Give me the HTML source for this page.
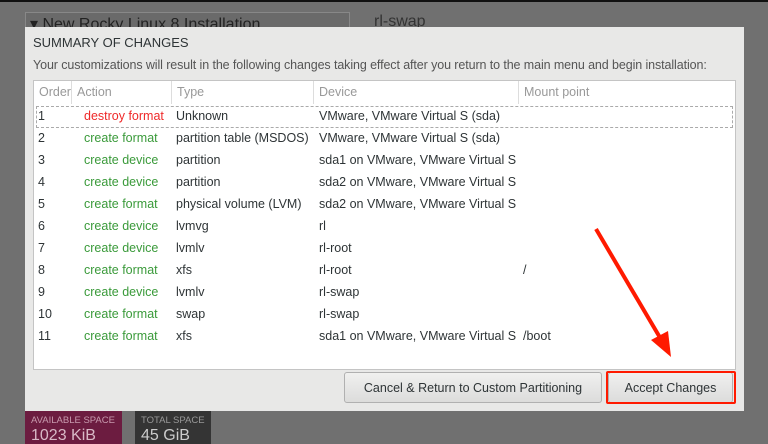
<!DOCTYPE html>
<html><head><meta charset="utf-8"><style>
*{margin:0;padding:0;box-sizing:border-box}
html,body{width:768px;height:444px;overflow:hidden}
body{background:#707070;font-family:"Liberation Sans",sans-serif;font-size:12.5px;color:#2e3436;position:relative}
.topbar{position:absolute;left:0;top:0;width:768px;height:2px;background:#111}
.bgpanel{position:absolute;left:25px;top:12px;width:325px;height:30px;border:1px solid #888;background:#6a6a6a}
.bgtitle{position:absolute;left:30px;top:14px;font-size:16px;color:#222}
.bgr{position:absolute;left:374px;top:13px;font-size:16px;color:#333}
.dlg{position:absolute;left:25px;top:27px;width:719px;height:384px;background:#e8e8e7}
.h{position:absolute;left:8px;top:8px;font-size:13px;color:#2e3436}
.sub{position:absolute;left:8px;top:31px;font-size:12.5px;color:#555;white-space:nowrap;letter-spacing:-0.1px}
.tbl{position:absolute;left:8px;top:53px;width:703px;height:290px;background:#fff;border:1px solid #c4c4c4}
.hd{position:absolute;top:0;height:23px;line-height:22px;color:#999;border-right:1px solid #ddd;padding-left:5px;white-space:nowrap;overflow:hidden}
.row{position:absolute;left:0;width:703px;height:22px;line-height:20px;white-space:nowrap}
.row span{position:absolute}
.r{color:#ef2929}.g{color:#3a9a3a}
.btn{position:absolute;top:345px;height:31px;line-height:30px;text-align:center;border:1px solid #b0b0b0;border-radius:3px;background:linear-gradient(#f0f0ef,#dcdcdb);color:#2e3436;white-space:nowrap}
.av{position:absolute;left:25px;top:411px;width:97px;height:33px;background:#6c1c40;color:#c89aae;font-size:9.5px;padding:4px 6px;white-space:nowrap}
.tot{position:absolute;left:135px;top:411px;width:76px;height:33px;background:#343434;color:#999;font-size:9.5px;padding:4px 6px;white-space:nowrap}
.big{font-size:16px;color:#d8b8c6;margin-top:1px}
</style></head><body>
<div class="topbar"></div>
<div class="bgpanel"></div>
<div class="bgtitle">▾ New Rocky Linux 8 Installation</div>
<div class="bgr">rl-swap</div>
<div class="dlg">
<div class="h">SUMMARY OF CHANGES</div>
<div class="sub">Your customizations will result in the following changes taking effect after you return to the main menu and begin installation:</div>
<div class="tbl">
<div class="hd" style="left:0;width:38px">Order</div>
<div class="hd" style="left:38px;width:100px">Action</div>
<div class="hd" style="left:138px;width:142px">Type</div>
<div class="hd" style="left:280px;width:205px">Device</div>
<div class="hd" style="left:485px;width:218px;border:none">Mount point</div>
<div style="position:absolute;left:2px;top:25px;width:697px;height:22px;border:1px dashed #aaa"></div>
<div class="row" style="top:25px"><span style="left:4px">1</span><span class="r" style="left:50px">destroy format</span><span style="left:142px">Unknown</span><span style="left:285px">VMware, VMware Virtual S (sda)</span></div>
<div class="row" style="top:47px"><span style="left:4px">2</span><span class="g" style="left:50px">create format</span><span style="left:142px">partition table (MSDOS)</span><span style="left:285px">VMware, VMware Virtual S (sda)</span></div>
<div class="row" style="top:69px"><span style="left:4px">3</span><span class="g" style="left:50px">create device</span><span style="left:142px">partition</span><span style="left:285px">sda1 on VMware, VMware Virtual S</span></div>
<div class="row" style="top:91px"><span style="left:4px">4</span><span class="g" style="left:50px">create device</span><span style="left:142px">partition</span><span style="left:285px">sda2 on VMware, VMware Virtual S</span></div>
<div class="row" style="top:113px"><span style="left:4px">5</span><span class="g" style="left:50px">create format</span><span style="left:142px">physical volume (LVM)</span><span style="left:285px">sda2 on VMware, VMware Virtual S</span></div>
<div class="row" style="top:135px"><span style="left:4px">6</span><span class="g" style="left:50px">create device</span><span style="left:142px">lvmvg</span><span style="left:285px">rl</span></div>
<div class="row" style="top:157px"><span style="left:4px">7</span><span class="g" style="left:50px">create device</span><span style="left:142px">lvmlv</span><span style="left:285px">rl-root</span></div>
<div class="row" style="top:179px"><span style="left:4px">8</span><span class="g" style="left:50px">create format</span><span style="left:142px">xfs</span><span style="left:285px">rl-root</span><span style="left:489px">/</span></div>
<div class="row" style="top:201px"><span style="left:4px">9</span><span class="g" style="left:50px">create device</span><span style="left:142px">lvmlv</span><span style="left:285px">rl-swap</span></div>
<div class="row" style="top:223px"><span style="left:4px">10</span><span class="g" style="left:50px">create format</span><span style="left:142px">swap</span><span style="left:285px">rl-swap</span></div>
<div class="row" style="top:245px"><span style="left:4px">11</span><span class="g" style="left:50px">create format</span><span style="left:142px">xfs</span><span style="left:285px">sda1 on VMware, VMware Virtual S</span><span style="left:489px">/boot</span></div>
</div>
<div class="btn" style="left:319px;width:258px">Cancel &amp; Return to Custom Partitioning</div>
<div class="btn" style="left:583px;width:125px">Accept Changes</div>
<div style="position:absolute;left:581px;top:344px;width:130px;height:33px;border:2px solid #ff1a00;border-radius:2px"></div>
</div>
<svg style="position:absolute;left:0;top:0" width="768" height="444"><line x1="596" y1="229" x2="662" y2="341" stroke="#ff1a00" stroke-width="4"/><polygon points="671,357 651,340 668,331" fill="#ff1a00"/></svg>
<div class="av">AVAILABLE SPACE<div class="big">1023 KiB</div></div>
<div class="tot">TOTAL SPACE<div class="big" style="color:#ccc">45 GiB</div></div>
</body></html>
